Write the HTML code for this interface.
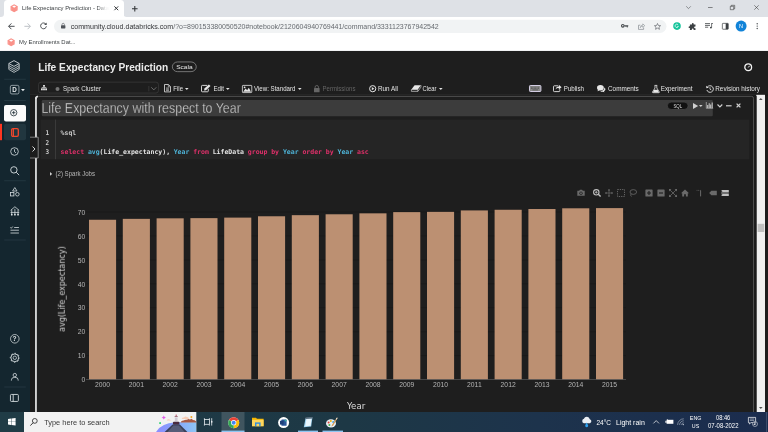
<!DOCTYPE html>
<html lang="en"><head><meta charset="utf-8"><title>Life Expectancy Prediction - Databricks</title>
<style>
html,body{margin:0;padding:0;background:#1e1e1e;}
body{width:768px;height:432px;overflow:hidden;position:relative;font-family:"Liberation Sans",sans-serif;}
.a{position:absolute;}
.t{position:absolute;left:0;top:0;white-space:pre;transform-origin:0 0;will-change:transform;}
.i{display:inline-block;transform-origin:0 0;}
svg{position:absolute;overflow:visible;}
</style></head><body>
<svg style="left:0px;top:0px" width="768" height="17"><rect x="0.00" y="0.00" width="768" height="17" rx="0" fill="#dee1e6"/></svg>
<div class="a" style="left:4px;top:0px;width:119.5px;height:17px;background:#fff;border-radius:3.5px 3.5px 0 0;"></div>
<svg style="left:0px;top:12px;" width="128" height="5" viewBox="0 0 128 5"><path d="M0.8 5 Q4 5 4 1.8 V5 Z M126.7 5 Q123.5 5 123.5 1.8 V5 Z" fill="#fff"/></svg>
<svg style="left:0px;top:17px" width="768" height="35"><rect x="0.00" y="0.00" width="768" height="34.3" rx="0" fill="#fff"/></svg>
<svg style="left:0px;top:50px" width="768" height="2"><rect x="0.00" y="0.70" width="768" height="0.6" rx="0" fill="#d0d3d8"/></svg>
<svg style="left:9.85px;top:4.049999999999999px;" width="8.3" height="8.715000000000002" viewBox="0 0 24 25.2"><path d="M12 0.5 L22.5 6.5 V18 L12 24 L1.5 18 V6.5 Z" fill="#fa9189"/><path d="M12 4.4 L17.6 7.6 L12 10.8 L6.4 7.6 Z" fill="#fff"/><path d="M1.5 11 L4.4 12.6 M22.5 11 L19.6 12.6 M1.5 15.2 L4.4 16.8 M22.5 15.2 L19.6 16.8" stroke="#fff" stroke-width="1" opacity=".7"/></svg>
<svg style="left:113.6px;top:6.1px;" width="4.6" height="4.6" viewBox="0 0 4.6 4.6"><path d="M0.4 0.4 L4.2 4.2 M4.2 0.4 L0.4 4.2" stroke="#303336" stroke-width="1" fill="none"/></svg>
<svg style="left:132.2px;top:5.6px;" width="5.6" height="5.6" viewBox="0 0 5.6 5.6"><path d="M2.8 0 V5.6 M0 2.8 H5.6" stroke="#303336" stroke-width="1.05" fill="none"/></svg>
<svg style="left:685.5px;top:5.5px;" width="5" height="3" viewBox="0 0 5 3"><path d="M0.2 0.3 L2.5 2.6 L4.8 0.3" stroke="#44474a" stroke-width="0.55" fill="none"/></svg>
<svg style="left:708px;top:7px" width="5" height="1"><rect x="0.00" y="0.30" width="4.6" height="0.55" rx="0" fill="#333"/></svg>
<svg style="left:730.2px;top:4.7px;" width="5" height="5" viewBox="0 0 5 5"><path d="M0.3 1.3 H3.7 V4.7 H0.3 Z M1.3 1.3 V0.3 H4.7 V3.7 H3.7" stroke="#333" stroke-width="0.55" fill="none"/></svg>
<svg style="left:753.8px;top:5px;" width="5" height="5" viewBox="0 0 5 5"><path d="M0.3 0.3 L4.7 4.7 M4.7 0.3 L0.3 4.7" stroke="#333" stroke-width="0.55" fill="none"/></svg>
<svg style="left:7.6px;top:23px;" width="7" height="6.6" viewBox="0 0 7 6.6"><path d="M3.4 0.4 L0.6 3.3 L3.4 6.2 M0.7 3.3 H6.6" stroke="#4a4e52" stroke-width="1" fill="none"/></svg>
<svg style="left:23.6px;top:23px;" width="7" height="6.6" viewBox="0 0 7 6.6"><path d="M3.6 0.4 L6.4 3.3 L3.6 6.2 M6.3 3.3 H0.4" stroke="#bdc1c6" stroke-width="1" fill="none"/></svg>
<svg style="left:39.6px;top:22.3px;" width="7" height="7" viewBox="0 0 7 7"><path d="M5.9 2.2 A2.9 2.9 0 1 0 6.4 4.3" stroke="#4a4e52" stroke-width="1" fill="none"/><path d="M6.7 0.4 V3 H4.1 Z" fill="#4a4e52"/></svg>
<svg style="left:54px;top:19px" width="613" height="14"><rect x="0.00" y="0.70" width="612.5" height="13.2" rx="6.6" fill="#f1f3f4"/></svg>
<svg style="left:60.8px;top:23px;" width="4.4" height="5.6" viewBox="0 0 4.4 5.6"><rect x="0" y="2.2" width="4.4" height="3.3" rx="0.5" fill="#50545a"/><path d="M1 2.4 V1.5 A1.2 1.2 0 0 1 3.4 1.5 V2.4" stroke="#50545a" stroke-width="0.6" fill="none"/></svg>
<svg style="left:621.2px;top:24.3px;" width="7.4" height="3.6" viewBox="0 0 7.4 3.6"><circle cx="1.8" cy="1.8" r="1.3" stroke="#44484c" stroke-width="1.1" fill="none"/><path d="M3.2 1.8 H7.3 M6.3 1.8 V3.4 M5 1.8 V2.9" stroke="#44484c" stroke-width="1" fill="none"/></svg>
<svg style="left:637.6px;top:22.8px;" width="7" height="6.8" viewBox="0 0 7 6.8"><path d="M2.4 2.2 H0.5 V6.4 H5.6 V4.6" stroke="#858b91" stroke-width="0.7" fill="none"/><path d="M2.3 4.6 C2.5 3 3.5 2.2 4.8 2.1 V0.9 L6.8 2.7 L4.8 4.4 V3.2 C3.8 3.2 2.9 3.6 2.3 4.6 Z" stroke="#858b91" stroke-width="0.6" fill="none"/></svg>
<svg style="left:653.5px;top:22.7px;" width="7" height="6.8" viewBox="0 0 7 6.8"><path d="M3.5 0.5 L4.4 2.5 L6.6 2.7 L4.95 4.15 L5.45 6.3 L3.5 5.15 L1.55 6.3 L2.05 4.15 L0.4 2.7 L2.6 2.5 Z" stroke="#50545a" stroke-width="0.6" fill="none" stroke-linejoin="round"/></svg>
<svg style="left:673px;top:22px" width="8" height="8"><rect x="0.20" y="0.30" width="7.6" height="7.6" rx="3.8" fill="#15c39a"/></svg>
<svg style="left:673.2px;top:22.3px;" width="7.6" height="7.6" viewBox="0 0 7.6 7.6"><path d="M5.2 2.9 A1.7 1.7 0 1 0 5.4 4.4 H4.1" stroke="#fff" stroke-width="0.7" fill="none"/></svg>
<svg style="left:689.2px;top:22.6px;" width="7.4" height="7.4" viewBox="0 0 7.4 7.4"><path d="M2.9 0.9 A0.9 0.9 0 0 1 4.7 0.9 V1.6 H6.5 V3.4 H6 A0.9 0.9 0 0 0 6 5.2 H6.5 V7 H4.6 V6.5 A0.9 0.9 0 0 0 2.8 6.5 V7 H0.9 V5.1 H0.5 A0.9 0.9 0 0 1 0.5 3.3 H0.9 V1.6 H2.9 Z" fill="#3c4043"/></svg>
<svg style="left:705.2px;top:23.2px;" width="8" height="6" viewBox="0 0 8 6"><path d="M0 0.6 H5 M0 2.4 H5 M0 4.2 H3.2" stroke="#3c4043" stroke-width="0.8" fill="none"/><path d="M6.6 0.2 V4.4" stroke="#3c4043" stroke-width="0.7"/><circle cx="5.9" cy="4.6" r="0.95" fill="#3c4043"/><path d="M6.6 0.2 H7.9 V1.1 H6.6Z" fill="#3c4043"/></svg>
<svg style="left:721.6px;top:22.8px;" width="6.6" height="6.6" viewBox="0 0 6.6 6.6"><rect x="0.35" y="0.35" width="5.9" height="5.9" rx="0.6" stroke="#3c4043" stroke-width="0.7" fill="none"/><rect x="3.7" y="0.4" width="2.5" height="5.8" fill="#3c4043"/></svg>
<svg style="left:735px;top:20px" width="12" height="12"><rect x="0.60" y="0.60" width="11" height="11" rx="5.5" fill="#1183d8"/></svg>
<svg style="left:756px;top:23px" width="2" height="2"><rect x="0.50" y="0.00" width="1.4" height="1.4" rx="0.7" fill="#44484c"/></svg>
<svg style="left:756px;top:25px" width="2" height="2"><rect x="0.50" y="0.40" width="1.4" height="1.4" rx="0.7" fill="#44484c"/></svg>
<svg style="left:756px;top:27px" width="2" height="3"><rect x="0.50" y="0.80" width="1.4" height="1.4" rx="0.7" fill="#44484c"/></svg>
<svg style="left:6.85px;top:38.050000000000004px;" width="8.3" height="8.715000000000002" viewBox="0 0 24 25.2"><path d="M12 0.5 L22.5 6.5 V18 L12 24 L1.5 18 V6.5 Z" fill="#fa9189"/><path d="M12 4.4 L17.6 7.6 L12 10.8 L6.4 7.6 Z" fill="#fff"/><path d="M1.5 11 L4.4 12.6 M22.5 11 L19.6 12.6 M1.5 15.2 L4.4 16.8 M22.5 15.2 L19.6 16.8" stroke="#fff" stroke-width="1" opacity=".7"/></svg>
<svg style="left:0px;top:51px" width="768" height="361"><rect x="0.00" y="0.00" width="768" height="361" rx="0" fill="#1e1e1e"/></svg>
<svg style="left:0px;top:51px" width="30" height="361"><rect x="0.00" y="0.00" width="30" height="361" rx="0" fill="#14262f"/></svg>
<svg style="left:8px;top:59.5px;" width="12" height="13" viewBox="0 0 12 13"><path d="M6 0.6 L11.2 3.5 L6 6.4 L0.8 3.5 Z" stroke="#cfd5d8" stroke-width="0.9" fill="none" stroke-linejoin="round"/><path d="M0.8 3.6 V9.4 L6 12.4 L11.2 9.4 V3.6" stroke="#cfd5d8" stroke-width="0.8" fill="none" stroke-linejoin="round"/><path d="M0.8 5.6 L6 8.6 L11.2 5.6 M0.8 7.5 L6 10.5 L11.2 7.5" stroke="#cfd5d8" stroke-width="0.8" fill="none"/></svg>
<svg style="left:4px;top:78px" width="22" height="2"><rect x="0.20" y="0.80" width="21.6" height="0.8" rx="0" fill="#263b44"/></svg>
<svg style="left:4px;top:100px" width="22" height="1"><rect x="0.20" y="0.10" width="21.6" height="0.8" rx="0" fill="#263b44"/></svg>
<svg style="left:9.9px;top:84.9px;" width="9.3" height="9.3" viewBox="0 0 9.3 9.3"><rect x="0.35" y="0.35" width="8.6" height="8.6" rx="1.5" stroke="#c3cdd1" stroke-width="0.7" fill="none"/></svg>
<svg style="left:21.1px;top:88.5px;" width="3.9" height="2.2" viewBox="0 0 3.9 2.2"><path d="M0 0 H3.9 L1.95 2.2 Z" fill="#e4e8ea"/></svg>
<svg style="left:4px;top:105px" width="22" height="17"><rect x="0.00" y="0.00" width="22" height="16.4" rx="2.0" fill="#fbfbfb"/></svg>
<svg style="left:10.3px;top:109.3px;" width="7.4" height="7.4" viewBox="0 0 7.4 7.4"><circle cx="3.7" cy="3.7" r="3.2" stroke="#1c2b33" stroke-width="0.8" fill="none"/><path d="M3.7 1.9 V5.5 M1.9 3.7 H5.5" stroke="#1c2b33" stroke-width="0.8"/></svg>
<svg style="left:4px;top:123px" width="22" height="18"><rect x="0.00" y="0.80" width="22" height="16.4" rx="2.0" fill="#21363f"/></svg>
<svg style="left:0px;top:123px" width="2" height="18"><rect x="0.00" y="0.80" width="2" height="16.4" rx="0" fill="#ff3621"/></svg>
<svg style="left:10.5px;top:127.5px;" width="8" height="9" viewBox="0 0 8 9"><rect x="0.7" y="0.7" width="6.6" height="7.6" rx="1.2" stroke="#f4482c" stroke-width="1.3" fill="none"/><path d="M2.4 0.7 V8.3" stroke="#f4482c" stroke-width="1.1"/></svg>
<svg style="left:10.4px;top:146.9px;" width="9" height="9" viewBox="0 0 8 8"><circle cx="4" cy="4" r="3.4" stroke="#d5dcdf" stroke-width="0.72" fill="none"/><path d="M4 2 V4.2 L5.4 5.2" stroke="#d5dcdf" stroke-width="0.72" fill="none"/></svg>
<svg style="left:10.2px;top:165.6px;" width="9.6" height="9.6" viewBox="0 0 8.4 8.4"><circle cx="3.4" cy="3.4" r="2.8" stroke="#d5dcdf" stroke-width="0.8" fill="none"/><path d="M5.5 5.5 L8 8" stroke="#d5dcdf" stroke-width="0.8"/></svg>
<svg style="left:4px;top:180px" width="22" height="2"><rect x="0.20" y="0.40" width="21.6" height="0.8" rx="0" fill="#263b44"/></svg>
<svg style="left:9.9px;top:186.9px;" width="9.6" height="9.6" viewBox="0 0 8.6 8.6"><path d="M4.3 0.5 L6.3 3.6 H2.3 Z" stroke="#d5dcdf" stroke-width="0.72" fill="none" stroke-linejoin="round"/><rect x="0.5" y="5" width="3" height="3" stroke="#d5dcdf" stroke-width="0.72" fill="none"/><circle cx="6.6" cy="6.5" r="1.6" stroke="#d5dcdf" stroke-width="0.72" fill="none"/></svg>
<svg style="left:9.8px;top:205.5px;" width="9.8" height="9.8" viewBox="0 0 9 9"><path d="M0.6 4 L4.5 0.7 L8.4 4 M1.6 3.4 V8.2 M7.4 3.4 V8.2 M4.5 2.6 V8.2 M0.5 5.9 H8.5" stroke="#d5dcdf" stroke-width="0.72" fill="none"/><circle cx="1.6" cy="8" r="0.8" fill="#dfe4e6"/><circle cx="4.5" cy="8" r="0.8" fill="#dfe4e6"/><circle cx="7.4" cy="8" r="0.8" fill="#dfe4e6"/></svg>
<svg style="left:10.1px;top:225.6px;" width="9.2" height="8" viewBox="0 0 8.4 7.4"><path d="M0.3 1.3 L1.1 2.1 L2.5 0.5 M3.8 1.4 H8.2 M0.4 3.9 H8.2 M0.4 6.5 H8.2" stroke="#d5dcdf" stroke-width="0.75" fill="none"/></svg>
<svg style="left:4px;top:239px" width="22" height="2"><rect x="0.20" y="0.60" width="21.6" height="0.8" rx="0" fill="#263b44"/></svg>
<svg style="left:9.7px;top:333.9px;" width="9.6" height="9.6" viewBox="0 0 9.6 9.6"><circle cx="4.8" cy="4.8" r="4.3" stroke="#d5dcdf" stroke-width="0.75" fill="none"/></svg>
<svg style="left:9.7px;top:352.7px;" width="9.6" height="9.6" viewBox="0 0 9.6 9.6"><circle cx="4.8" cy="4.8" r="3.9" stroke="#d5dcdf" stroke-width="0.9" fill="none"/><circle cx="4.8" cy="4.8" r="4.5" stroke="#d5dcdf" stroke-width="0.9" fill="none" stroke-dasharray="1.4 2.13" stroke-dashoffset="0.7"/><circle cx="4.8" cy="4.8" r="1.7" stroke="#d5dcdf" stroke-width="0.75" fill="none"/></svg>
<svg style="left:10.9px;top:372.6px;" width="7.6" height="7.8" viewBox="0 0 7.6 7.8"><circle cx="3.8" cy="2.1" r="1.7" stroke="#d5dcdf" stroke-width="0.8" fill="none"/><path d="M0.4 7.6 V6.9 A3.4 2.6 0 0 1 7.2 6.9 V7.6" stroke="#d5dcdf" stroke-width="0.8" fill="none"/></svg>
<svg style="left:4px;top:386px" width="22" height="2"><rect x="0.20" y="0.60" width="21.6" height="0.8" rx="0" fill="#263b44"/></svg>
<svg style="left:10.1px;top:394px;" width="8.8" height="8" viewBox="0 0 8.8 8"><rect x="0.45" y="0.45" width="7.9" height="7" rx="0.9" stroke="#d5dcdf" stroke-width="0.9" fill="none"/><path d="M3.2 0.5 V7.5" stroke="#d5dcdf" stroke-width="0.9"/></svg>
<svg style="left:172px;top:61px" width="25" height="11"><rect x="0.35" y="0.95" width="23.90" height="9.70" rx="5.2" fill="none" stroke="#9a9a9a" stroke-width="0.7"/></svg>
<svg style="left:743.6px;top:62.8px;" width="8.4" height="8.4" viewBox="0 0 8.4 8.4"><circle cx="4.2" cy="4.2" r="3.4" stroke="#f2f2f2" stroke-width="1.3" fill="none"/><path d="M4.2 4.5 L5.7 2.7" stroke="#f2f2f2" stroke-width="1"/></svg>
<svg style="left:38px;top:81px" width="121" height="13"><rect x="0.55" y="1.15" width="119.90" height="10.90" rx="2.5" fill="none" stroke="#3e3e3e" stroke-width="0.7"/></svg>
<svg style="left:41.2px;top:85.2px;" width="6" height="5.4" viewBox="0 0 6 5.4"><path d="M3 0.2 V2.6 M0.9 4 V2.6 H5.1 V4 M3 2.6 V4" stroke="#ddd" stroke-width="0.7" fill="none"/><rect x="2.1" y="0" width="1.8" height="1.6" fill="#ddd"/><rect x="0" y="3.6" width="1.8" height="1.7" fill="#ddd"/><rect x="2.1" y="3.6" width="1.8" height="1.7" fill="#ddd"/><rect x="4.2" y="3.6" width="1.8" height="1.7" fill="#ddd"/></svg>
<svg style="left:55px;top:86px" width="5" height="5"><rect x="0.50" y="0.90" width="4" height="4" rx="2.0" fill="#747474"/></svg>
<svg style="left:148px;top:86px" width="2" height="6"><rect x="0.60" y="0.00" width="0.6" height="5.4" rx="0" fill="#444"/></svg>
<svg style="left:151px;top:87px;" width="5.6" height="3.4" viewBox="0 0 5.6 3.4"><path d="M0.3 0.3 L2.8 2.9 L5.3 0.3" stroke="#8a8a8a" stroke-width="0.7" fill="none"/></svg>
<svg style="left:164.2px;top:84.4px;" width="7" height="8.4" viewBox="0 0 7 8.4"><path d="M0.5 0.5 H4.4 L6.5 2.6 V7.9 H0.5 Z" stroke="#e6e6e6" stroke-width="0.8" fill="none" stroke-linejoin="round"/><path d="M4.3 0.6 V2.8 H6.4" stroke="#e6e6e6" stroke-width="0.6" fill="none"/><path d="M2 4 H5 M2 5.2 H5 M2 6.4 H5" stroke="#e6e6e6" stroke-width="0.6"/></svg>
<svg style="left:184.79999999999998px;top:88.1px;" width="3.6" height="2" viewBox="0 0 3.6 2"><path d="M0 0 H3.6 L1.8 2 Z" fill="#e4e4e4"/></svg>
<svg style="left:201.2px;top:84.4px;" width="10.6" height="8.4" viewBox="0 0 10.6 8.4"><path d="M6.2 1.4 H1.3 A0.8 0.8 0 0 0 0.5 2.2 V7 A0.8 0.8 0 0 0 1.3 7.8 H6.5 A0.8 0.8 0 0 0 7.3 7 V4.8" stroke="#e6e6e6" stroke-width="0.9" fill="none"/><path d="M3.4 4.6 L7.9 0.4 L9.5 1.9 L5 6.2 L3.1 6.6 Z" fill="#e6e6e6"/></svg>
<svg style="left:225.79999999999998px;top:88.1px;" width="3.6" height="2" viewBox="0 0 3.6 2"><path d="M0 0 H3.6 L1.8 2 Z" fill="#e4e4e4"/></svg>
<svg style="left:242px;top:84.6px;" width="10.2" height="8" viewBox="0 0 10.2 8"><rect x="0.4" y="0.4" width="9.4" height="7.2" rx="0.6" stroke="#e6e6e6" stroke-width="0.8" fill="none"/><path d="M1.2 6.8 L3.6 3.4 L5.2 5.2 L6.8 2.8 L9 6.8 Z" fill="#e6e6e6"/><circle cx="2.6" cy="2.3" r="0.9" fill="#e6e6e6"/></svg>
<svg style="left:297.9px;top:88.1px;" width="3.6" height="2" viewBox="0 0 3.6 2"><path d="M0 0 H3.6 L1.8 2 Z" fill="#e4e4e4"/></svg>
<svg style="left:314.4px;top:84.8px;" width="5.6" height="7.2" viewBox="0 0 5.6 7.2"><rect x="0" y="3" width="5.6" height="4.2" rx="0.5" fill="#666"/><path d="M1.1 3.2 V2.2 A1.7 1.7 0 0 1 4.5 2.2 V3.2" stroke="#666" stroke-width="0.9" fill="none"/></svg>
<svg style="left:368.6px;top:85px;" width="7.4" height="7.4" viewBox="0 0 7.4 7.4"><circle cx="3.7" cy="3.7" r="3.1" stroke="#e6e6e6" stroke-width="1" fill="none"/><path d="M2.8 2.1 L5.4 3.7 L2.8 5.3 Z" fill="#e6e6e6"/></svg>
<svg style="left:411px;top:85.4px;" width="10.4" height="6.8" viewBox="0 0 10.4 6.8"><path d="M3.6 0.3 H10 L6.8 4.6 H0.4 Z" fill="#e6e6e6"/><path d="M0.4 4.6 H6.8 V6.4 H0.4 Z" stroke="#e6e6e6" stroke-width="0.6" fill="none"/><path d="M6.8 6.4 L10 2.1 V0.3" stroke="#e6e6e6" stroke-width="0.6" fill="none"/></svg>
<svg style="left:438.9px;top:88.1px;" width="3.6" height="2" viewBox="0 0 3.6 2"><path d="M0 0 H3.6 L1.8 2 Z" fill="#e4e4e4"/></svg>
<svg style="left:528.6px;top:85.4px;" width="12.4" height="7" viewBox="0 0 12.4 7"><rect x="0.5" y="0.5" width="11.4" height="6" rx="0.8" stroke="#d6d0e6" stroke-width="1" fill="#8a8a8a"/><path d="M2 2.2 H10.4 M2 3.5 H10.4" stroke="#4a4a4a" stroke-width="0.7" stroke-dasharray="0.9 0.5"/><path d="M3.4 4.9 H9" stroke="#4a4a4a" stroke-width="0.7"/></svg>
<svg style="left:553px;top:84.4px;" width="8.8" height="8" viewBox="0 0 8.8 8"><path d="M5 1.8 H1.3 A0.8 0.8 0 0 0 0.5 2.6 V6.8 A0.8 0.8 0 0 0 1.3 7.6 H6 A0.8 0.8 0 0 0 6.8 6.8 V5.2" stroke="#e6e6e6" stroke-width="0.9" fill="none"/><path d="M2.6 5.6 C2.8 3.4 4 2.5 5.8 2.4 V0.7 L8.6 3.2 L5.8 5.6 V4.1 C4.4 4.1 3.4 4.5 2.6 5.6 Z" fill="#e6e6e6"/></svg>
<svg style="left:597px;top:85px;" width="9" height="7.4" viewBox="0 0 9 7.4"><ellipse cx="3.4" cy="2.8" rx="3.4" ry="2.7" fill="#e6e6e6"/><path d="M1 4.4 L0.6 6.2 L2.8 5.2 Z" fill="#e6e6e6"/><path d="M7.2 2.4 A2.9 2.3 0 0 1 6.9 6.3 L7.6 7.3 L5.4 6.8 A3 2.3 0 0 1 3.2 6.2 A4 3.2 0 0 0 7.2 2.4 Z" fill="#e6e6e6"/></svg>
<svg style="left:652px;top:84.6px;" width="7.8" height="8" viewBox="0 0 7.8 8"><path d="M2.6 0.4 H5.2 M3 0.4 V3 L0.5 7 A0.5 0.5 0 0 0 0.9 7.7 H6.9 A0.5 0.5 0 0 0 7.3 7 L4.8 3 V0.4" stroke="#e6e6e6" stroke-width="0.8" fill="none"/><path d="M2.2 4.8 H5.6 L7 7.4 H0.8 Z" fill="#e6e6e6"/></svg>
<svg style="left:705.8px;top:84.8px;" width="7.8" height="7.8" viewBox="0 0 7.8 7.8"><path d="M1.3 2.2 A3.3 3.3 0 1 1 0.9 5" stroke="#e6e6e6" stroke-width="0.9" fill="none"/><path d="M0.1 0.7 L0.4 3.3 L2.9 2.7 Z" fill="#e6e6e6"/><path d="M4 2.2 V4.2 L5.3 5" stroke="#e6e6e6" stroke-width="0.8" fill="none"/></svg>
<svg style="left:30px;top:94px" width="727" height="1"><rect x="0.00" y="0.00" width="726.3" height="0.7" rx="0" fill="#484848"/></svg>
<svg style="left:30px;top:94px" width="738" height="2"><rect x="0.00" y="0.40" width="738" height="1.6" rx="0" fill="#1a1a1a"/></svg>
<svg style="left:756px;top:94px" width="9" height="318"><rect x="0.30" y="0.80" width="8.7" height="317.2" rx="0" fill="#f1f1f1"/></svg>
<svg style="left:759px;top:98.4px;" width="3.6" height="2" viewBox="0 0 3.6 2"><path d="M0 2 H3.6 L1.8 0 Z" fill="#505050"/></svg>
<svg style="left:759px;top:406.8px;" width="3.6" height="2" viewBox="0 0 3.6 2"><path d="M0 0 H3.6 L1.8 2 Z" fill="#505050"/></svg>
<svg style="left:757px;top:223px" width="8" height="9"><rect x="0.60" y="0.80" width="6.6" height="8.2" rx="0" fill="#c1c1c1"/></svg>
<svg style="left:30px;top:96px" width="727" height="316"><rect x="0.00" y="0.00" width="726.6" height="316" rx="0" fill="#1b1b1b"/></svg>
<svg style="left:35px;top:96px" width="719" height="330"><rect x="0.95" y="0.35" width="717.60" height="329.30" rx="2" fill="#1e1e1e" stroke="#6a6a6a" stroke-width="0.7"/></svg>
<svg style="left:35px;top:97px" width="2" height="321"><rect x="0.10" y="0.40" width="1.7" height="320" rx="0" fill="#e2e2e2"/></svg>
<svg style="left:35px;top:96px;" width="3" height="3" viewBox="0 0 3 3"><path d="M0.95 3 V2 A1.4 1.4 0 0 1 2.4 0.6 H3" stroke="#e2e2e2" stroke-width="1.7" fill="none"/></svg>
<svg style="left:41px;top:100px" width="672" height="17"><rect x="0.80" y="0.00" width="671" height="16.2" rx="1.2" fill="#3c3c3c"/></svg>
<svg style="left:667px;top:101px" width="22" height="9"><rect x="0.30" y="1.10" width="20.80" height="7.40" rx="4" fill="#111111" stroke="#505050" stroke-width="0.6"/></svg>
<svg style="left:693px;top:102.8px;" width="5.2" height="6" viewBox="0 0 5.2 6"><path d="M0 0 L5.2 3 L0 6 Z" fill="#d0d0d0"/></svg>
<svg style="left:699.2px;top:105.1px;" width="3.6" height="2" viewBox="0 0 3.6 2"><path d="M0 0 H3.6 L1.8 2 Z" fill="#d0d0d0"/></svg>
<svg style="left:706.2px;top:102.4px;" width="7.2" height="6.6" viewBox="0 0 7.2 6.6"><path d="M0.3 0 V6.3 H7.2" stroke="#d0d0d0" stroke-width="0.6" fill="none"/><path d="M1.2 6 V3 H2.2 V6 Z M2.7 6 V1.2 H3.7 V6 Z M4.2 6 V2.4 H5.2 V6 Z M5.7 6 V0.6 H6.7 V6 Z" fill="#d0d0d0"/></svg>
<svg style="left:716.8px;top:104.4px;" width="5.8" height="3.6" viewBox="0 0 5.8 3.6"><path d="M0.5 0.5 L2.9 2.9 L5.3 0.5" stroke="#d0d0d0" stroke-width="1.1" fill="none"/></svg>
<svg style="left:726px;top:105px" width="6" height="2"><rect x="0.00" y="0.20" width="5.6" height="1.2" rx="0" fill="#d0d0d0"/></svg>
<svg style="left:735.8px;top:103.4px;" width="5" height="5" viewBox="0 0 5 5"><path d="M0.6 0.6 L4.4 4.4 M4.4 0.6 L0.6 4.4" stroke="#d0d0d0" stroke-width="1.3" fill="none"/></svg>
<svg style="left:40px;top:119px" width="710" height="41"><rect x="0.60" y="0.60" width="708.6" height="39.6" rx="0" fill="#252525"/></svg>
<svg style="left:55px;top:119px" width="1" height="41"><rect x="0.40" y="0.60" width="0.6" height="39.6" rx="0" fill="#4a4a4a"/></svg>
<svg style="left:30px;top:136px;" width="10" height="24" viewBox="0 0 10 24"><path d="M0 1.2 H8.2 V22 H0" fill="#1c1c1c" stroke="#a8a8a8" stroke-width="0.7"/></svg>
<svg style="left:31.6px;top:145.6px;" width="3.6" height="6" viewBox="0 0 3.6 6"><path d="M0.5 0.5 L3 3 L0.5 5.5" stroke="#eee" stroke-width="0.9" fill="none"/></svg>
<svg style="left:49.6px;top:171.5px;" width="2.2" height="3.8" viewBox="0 0 2.2 3.8"><path d="M0 0 L2.2 1.9 L0 3.8 Z" fill="#cfcfcf"/></svg>
<svg style="left:0px;top:0px;" width="768" height="432" viewBox="0 0 768 432"><rect x="86" y="355.25" width="540" height="0.8" fill="#191919"/><rect x="86" y="331.31" width="540" height="0.8" fill="#191919"/><rect x="86" y="307.36" width="540" height="0.8" fill="#191919"/><rect x="86" y="283.42" width="540" height="0.8" fill="#191919"/><rect x="86" y="259.47" width="540" height="0.8" fill="#191919"/><rect x="86" y="235.52" width="540" height="0.8" fill="#191919"/><rect x="86" y="211.58" width="540" height="0.8" fill="#191919"/><rect x="89.00" y="219.76" width="27.1" height="159.84" fill="#bc9072"/><rect x="122.80" y="218.85" width="27.1" height="160.75" fill="#bc9072"/><rect x="156.60" y="218.32" width="27.1" height="161.28" fill="#bc9072"/><rect x="190.40" y="218.13" width="27.1" height="161.47" fill="#bc9072"/><rect x="224.20" y="217.61" width="27.1" height="161.99" fill="#bc9072"/><rect x="258.00" y="216.26" width="27.1" height="163.34" fill="#bc9072"/><rect x="291.80" y="215.16" width="27.1" height="164.44" fill="#bc9072"/><rect x="325.60" y="214.28" width="27.1" height="165.32" fill="#bc9072"/><rect x="359.40" y="213.34" width="27.1" height="166.26" fill="#bc9072"/><rect x="393.20" y="212.12" width="27.1" height="167.48" fill="#bc9072"/><rect x="427.00" y="211.86" width="27.1" height="167.74" fill="#bc9072"/><rect x="460.80" y="210.42" width="27.1" height="169.18" fill="#bc9072"/><rect x="494.60" y="209.77" width="27.1" height="169.83" fill="#bc9072"/><rect x="528.40" y="209.01" width="27.1" height="170.59" fill="#bc9072"/><rect x="562.20" y="208.29" width="27.1" height="171.31" fill="#bc9072"/><rect x="596.00" y="208.10" width="27.1" height="171.50" fill="#bc9072"/><rect x="86" y="379.25" width="540" height="0.7" fill="#5a5a5a"/></svg>
<div class="a" style="left:62.6px;top:289.4px;width:0;height:0;"><span style="position:absolute;white-space:pre;left:-42.8px;top:-6px;line-height:12px;font-family:'DejaVu Sans','Liberation Sans',sans-serif;font-size:8px;color:#d2d2d2;transform:rotate(-90deg);transform-origin:42.8px 6px;will-change:transform;">avg(Life_expectancy)</span></div>
<svg style="left:577.0px;top:189.0px;" width="8" height="8" viewBox="0 0 8 8"><path d="M0.3 1.8 H2.2 L2.9 0.8 H5.1 L5.8 1.8 H7.7 V6.8 H0.3 Z" fill="#6a6a6a"/><circle cx="4" cy="4.2" r="1.6" fill="#1e1e1e"/><circle cx="4" cy="4.2" r="0.9" fill="#6a6a6a"/></svg>
<svg style="left:592.8px;top:189.0px;" width="8" height="8" viewBox="0 0 8 8"><circle cx="3.3" cy="3.3" r="2.7" stroke="#c0c0c0" stroke-width="1.1" fill="none"/><path d="M5.3 5.3 L7.6 7.6" stroke="#c0c0c0" stroke-width="1.4"/><path d="M3.3 2 V4.6 M2 3.3 H4.6" stroke="#c0c0c0" stroke-width="0.8"/></svg>
<svg style="left:605.0px;top:189.0px;" width="8" height="8" viewBox="0 0 8 8"><path d="M4 0.2 V7.8 M0.2 4 H7.8" stroke="#6a6a6a" stroke-width="0.7"/><path d="M4 0 L5.2 1.5 H2.8 Z M4 8 L5.2 6.5 H2.8 Z M0 4 L1.5 2.8 V5.2 Z M8 4 L6.5 2.8 V5.2 Z" fill="#6a6a6a"/></svg>
<svg style="left:617.0px;top:189.0px;" width="8" height="8" viewBox="0 0 8 8"><rect x="0.5" y="0.5" width="7" height="7" stroke="#6a6a6a" stroke-width="0.9" fill="none" stroke-dasharray="1.3 1"/></svg>
<svg style="left:629.0px;top:189.0px;" width="8" height="8" viewBox="0 0 8 8"><ellipse cx="4.3" cy="3" rx="3.3" ry="2.4" stroke="#6a6a6a" stroke-width="0.8" fill="none"/><path d="M2.4 5 C1.2 5.4 1.4 6.8 2.6 7.4" stroke="#6a6a6a" stroke-width="0.8" fill="none"/></svg>
<svg style="left:645.4px;top:189.0px;" width="8" height="8" viewBox="0 0 8 8"><rect x="0.4" y="0.4" width="7.2" height="7.2" rx="0.6" fill="#6a6a6a"/><path d="M4 2 V6 M2 4 H6" stroke="#1e1e1e" stroke-width="1.1"/></svg>
<svg style="left:657.4px;top:189.0px;" width="8" height="8" viewBox="0 0 8 8"><rect x="0.4" y="0.4" width="7.2" height="7.2" rx="0.6" fill="#6a6a6a"/><path d="M2 4 H6" stroke="#1e1e1e" stroke-width="1.1"/></svg>
<svg style="left:669.0px;top:189.0px;" width="8" height="8" viewBox="0 0 8 8"><path d="M0.8 0.8 L7.2 7.2 M7.2 0.8 L0.8 7.2" stroke="#6a6a6a" stroke-width="0.8"/><path d="M0 0 H2.4 L0 2.4 Z M8 0 H5.6 L8 2.4 Z M0 8 H2.4 L0 5.6 Z M8 8 H5.6 L8 5.6 Z" fill="#6a6a6a"/></svg>
<svg style="left:681.2px;top:189.0px;" width="8" height="8" viewBox="0 0 8 8"><path d="M4 0.6 L8 4.2 H6.8 V7.6 H4.9 V5.2 H3.1 V7.6 H1.2 V4.2 H0 Z" fill="#6a6a6a"/></svg>
<svg style="left:696.2px;top:189.0px;" width="8" height="8" viewBox="0 0 8 8"><path d="M4.6 7.4 V1.4" stroke="#6a6a6a" stroke-width="1"/><path d="M0.6 1.4 H4.6" stroke="#6a6a6a" stroke-width="0.7" stroke-dasharray="0.9 0.7"/></svg>
<svg style="left:709.0px;top:189.0px;" width="8" height="8" viewBox="0 0 8 8"><path d="M0.2 4 L2.4 1.8 H7.8 V6.2 H2.4 Z" fill="#6a6a6a"/></svg>
<svg style="left:721.2px;top:189.0px;" width="8" height="8" viewBox="0 0 8 8"><rect x="0.2" y="1" width="7.6" height="2.5" fill="#c0c0c0"/><rect x="0.2" y="4.5" width="7.6" height="2.5" fill="#c0c0c0"/><path d="M0.2 1 L1.4 2.2 L0.2 3.5 Z M0.2 4.5 L1.4 5.7 L0.2 7 Z" fill="#1e1e1e"/></svg>
<div class="a" style="left:0px;top:412px;width:768px;height:20px;background:linear-gradient(90deg,#1f3b46 0%,#1d3845 45%,#1d334c 70%,#1b2c4e 100%);"></div>
<svg style="left:0px;top:412px" width="24" height="20"><rect x="0.00" y="0.00" width="24" height="20" rx="0" fill="#203c46"/></svg>
<svg style="left:8.2px;top:418.4px;" width="7.6" height="7.6" viewBox="0 0 7.6 7.6"><path d="M0 1.05 L3.1 0.62 V3.65 H0 Z M3.5 0.56 L7.6 0 V3.65 H3.5 Z M0 4 H3.1 V7 L0 6.58 Z M3.5 4 H7.6 V7.6 L3.5 7.04 Z" fill="#fff"/></svg>
<svg style="left:24px;top:412px" width="173" height="20"><rect x="0.00" y="0.00" width="172.3" height="20" rx="0" fill="#f2f2f2"/></svg>
<svg style="left:30px;top:418px;" width="7.6" height="8" viewBox="0 0 7.6 8"><circle cx="4.8" cy="2.9" r="2.4" stroke="#222" stroke-width="0.8" fill="none"/><path d="M3.1 4.7 L0.4 7.6" stroke="#222" stroke-width="0.9"/></svg>
<svg style="left:156px;top:412px;" width="41" height="20" viewBox="0 0 41 20"><defs><clipPath id="lc"><rect x="0" y="0" width="40.3" height="20"/></clipPath><linearGradient id="sea" x1="0" x2="1" y1="0" y2="0"><stop offset="0" stop-color="#8c8cff"/><stop offset="0.55" stop-color="#86a8fb"/><stop offset="1" stop-color="#8fc6f4"/></linearGradient></defs><g clip-path="url(#lc)"><path d="M0 20 Q4 11.5 20 10.2 H40.3 V20 Z" fill="url(#sea)"/><path d="M24.6 10.2 Q25.6 8.4 27.6 8.6 Q29 7.4 31 7.8 L32.4 7 L34 7.6 L35.6 6.8 L37 8 L38.6 8.2 L40.3 9.4 V10.4 H24.6 Z" fill="#a85a44"/><path d="M25.6 7 Q26.4 5.2 28 5.6 Q29.2 3.8 31 5 Q32.6 4.8 33 7 Z" fill="#f6cdb6"/><path d="M10.6 8.6 Q12 6.6 13.2 7.6 Q14.4 7.6 14.8 8.6 Z" fill="#f6cdb6"/><rect x="18.4" y="4.6" width="3.6" height="5.6" rx="0.5" fill="#e9e6ea"/><rect x="19" y="5.6" width="2.4" height="3.6" fill="#cfccd6"/><path d="M18.2 4.8 Q20.2 2.6 22.2 4.8 Z" fill="#8a4a5a"/><rect x="19.7" y="2.6" width="1" height="1.2" fill="#b0405a"/><rect x="17" y="9.8" width="6.4" height="3" rx="0.8" fill="#4a2c40"/><path d="M16.6 12.6 H23.8 L31.4 20 H8.6 Z" fill="#3a3f56"/><path d="M17.4 13.4 H23 L28.6 20 H11.4 Z" fill="#565c78"/><path d="M7.8 3.6 L8.6 5 L10 5.6 L8.6 6.2 L7.8 7.6 L7 6.2 L5.6 5.6 L7 5 Z" fill="#e25be8"/><rect x="3.2" y="10.2" width="1.8" height="1.8" fill="#3fd47a"/><circle cx="35.4" cy="5" r="1" fill="#f7a81e"/></g></svg>
<svg style="left:203.8px;top:418px;" width="8.6" height="7.8" viewBox="0 0 8.6 7.8"><rect x="0.4" y="1.5" width="5" height="4.8" stroke="#e8eef2" stroke-width="0.8" fill="none"/><path d="M0.4 0.2 V1.5 M5.4 0.2 V1.5 M0.4 6.3 V7.6 M5.4 6.3 V7.6" stroke="#e8eef2" stroke-width="0.8"/><path d="M7.7 0.2 V7.6" stroke="#e8eef2" stroke-width="0.8"/><rect x="7" y="3" width="1.4" height="1.6" fill="#e8eef2"/></svg>
<svg style="left:221px;top:412px" width="24" height="20"><rect x="0.50" y="0.00" width="23" height="20" rx="0" fill="#40555f"/></svg>
<svg style="left:221px;top:430px" width="24" height="2"><rect x="0.50" y="0.60" width="23" height="1.4" rx="0" fill="#8ec6f2"/></svg>
<svg style="left:228px;top:416.6px;" width="11.4" height="11.4" viewBox="0 0 11.4 11.4"><circle cx="5.7" cy="5.7" r="5.5" fill="#fff"/><path d="M5.7 5.7 L0.94 2.95 A5.5 5.5 0 0 1 10.46 2.95 Z" fill="#ea4335"/><path d="M5.7 5.7 L10.46 2.95 A5.5 5.5 0 0 1 5.7 11.2 Z" fill="#fbbc05"/><path d="M5.7 5.7 L5.7 11.2 A5.5 5.5 0 0 1 0.94 2.95 Z" fill="#34a853"/><circle cx="5.7" cy="5.7" r="2.6" fill="#fff"/><circle cx="5.7" cy="5.7" r="2" fill="#4285f4"/></svg>
<svg style="left:252.4px;top:417.4px;" width="11.6" height="9.4" viewBox="0 0 11.6 9.4"><path d="M0 0.8 H4 L5 1.8 H11.6 V9.2 H0 Z" fill="#f5b700"/><path d="M0 2.8 H11.6 V9.2 H0 Z" fill="#ffd75e"/><rect x="3" y="5.4" width="5.6" height="3.8" fill="#2f8ee0"/><rect x="4.4" y="6.8" width="2.8" height="2.4" fill="#ffd75e"/></svg>
<svg style="left:278px;top:416.6px;" width="11.2" height="11.2" viewBox="0 0 11.2 11.2"><circle cx="5.6" cy="5.6" r="5.5" fill="#fff"/><rect x="3.4" y="2.6" width="5.2" height="6.2" rx="0.6" fill="#2b579a"/><rect x="2" y="3.8" width="3.6" height="3.8" fill="#1d3f7a"/><circle cx="7.6" cy="3.4" r="1" fill="#3fb3a1"/></svg>
<svg style="left:302.6px;top:416.8px;" width="10.4" height="10.6" viewBox="0 0 10.4 10.6"><path d="M2.6 1 L9.4 0.2 L8.2 9.6 L0.8 10.2 Z" fill="#9fd2ee"/><path d="M3.4 2 L8.6 1.4 L7.6 8.8 L2.2 9.2 Z" fill="#e9f5fb"/><path d="M2.4 0.6 L9.6 0 L9.4 1.4 L2.4 2 Z" fill="#5a6a78"/></svg>
<svg style="left:298px;top:430px" width="20" height="2"><rect x="0.00" y="0.60" width="20" height="1.4" rx="0" fill="#8ec6f2"/></svg>
<svg style="left:326px;top:416.6px;" width="11.6" height="11" viewBox="0 0 11.6 11"><ellipse cx="5" cy="6.4" rx="5" ry="4.2" fill="#e8eef4"/><circle cx="2.6" cy="5.6" r="1" fill="#e0443a"/><circle cx="4.8" cy="4" r="1" fill="#f5b700"/><circle cx="7.2" cy="5" r="1" fill="#3fa0e0"/><circle cx="3.4" cy="8" r="1" fill="#46b04a"/><path d="M11 0.4 L6.2 7.6 L5.4 9.6 L7.2 8.4 L11.6 1 Z" fill="#d99a4a"/><path d="M11 0.4 L9.8 2.2 L10.4 2.8 L11.6 1 Z" fill="#f1f1f1"/></svg>
<svg style="left:322px;top:430px" width="21" height="2"><rect x="0.50" y="0.60" width="20.5" height="1.4" rx="0" fill="#8ec6f2"/></svg>
<svg style="left:581px;top:417.4px;" width="11.6" height="9.6" viewBox="0 0 11.6 9.6"><path d="M2.8 6.2 A2.3 2.3 0 0 1 2.9 1.8 A3.1 3.1 0 0 1 8.8 2.2 A2.1 2.1 0 0 1 9 6.2 Z" fill="#e9eef3"/><path d="M5.6 5.4 L7 8 A1.5 1.5 0 1 1 4.4 8 Z" fill="#2ea3f2"/></svg>
<svg style="left:653.4px;top:419.8px;" width="6.4" height="3.8" viewBox="0 0 6.4 3.8"><path d="M0.4 3.4 L3.2 0.6 L6 3.4" stroke="#fff" stroke-width="0.7" fill="none"/></svg>
<svg style="left:664.6px;top:419.4px;" width="8.6" height="5.6" viewBox="0 0 8.6 5.6"><rect x="1.6" y="0.8" width="6.8" height="4" fill="#fff"/><rect x="0.4" y="1.8" width="1.2" height="2" fill="#fff"/><path d="M2.4 0 V1.2" stroke="#fff" stroke-width="0.6"/></svg>
<svg style="left:677.4px;top:418.2px;" width="7.4" height="7.4" viewBox="0 0 7.4 7.4"><path d="M0.6 7 A6.2 6.2 0 0 1 6.8 0.8 M2.6 7 A4.2 4.2 0 0 1 6.8 2.8 M4.6 7 A2.2 2.2 0 0 1 6.8 4.8" stroke="#9aa4b4" stroke-width="0.7" fill="none"/><circle cx="6.3" cy="6.6" r="0.7" fill="#c8d0dc"/></svg>
<svg style="left:747.6px;top:417px;" width="9.6" height="9.6" viewBox="0 0 9.6 9.6"><path d="M0.4 0.4 H7.6 V5.6 H3 L1.4 7 V5.6 H0.4 Z" stroke="#fff" stroke-width="0.7" fill="none"/><path d="M1.8 2 H6.2 M1.8 3.4 H6.2" stroke="#fff" stroke-width="0.5"/><circle cx="7" cy="7" r="2.5" fill="#1b2c4e" stroke="#fff" stroke-width="0.5"/></svg>
<svg style="left:766px;top:412px" width="1" height="20"><rect x="0.20" y="0.00" width="0.5" height="20" rx="0" fill="#5a6a86"/></svg>
<span class="t" style="transform:translate3d(22px,3.22px,0);line-height:10px;font-family:'Liberation Sans', sans-serif;font-size:6.2px;font-weight:normal;color:#3c4043;"><span class="i" style="transform:translateX(0.00px) scaleX(0.9510)">Life Expectancy Prediction - Data</span></span>
<span class="t" style="transform:translate3d(70px,21.07px,0);line-height:11px;font-family:'Liberation Sans', sans-serif;font-size:7px;font-weight:normal;color:#202124;-webkit-text-stroke:0.05px #f1f3f4;"><span class="i" style="transform:translateX(0.70px) scaleX(1.0145)">community.cloud.databricks.com</span></span>
<span class="t" style="transform:translate3d(173px,21.07px,0);line-height:11px;font-family:'Liberation Sans', sans-serif;font-size:7px;font-weight:normal;color:#666a6f;"><span class="i" style="transform:translateX(0.20px)">/?o=890153380050520#notebook/2120604940769441/command/3331123767942542</span></span>
<span class="t" style="transform:translate3d(739px,20.94px,0);line-height:10px;font-family:'Liberation Sans', sans-serif;font-size:5.6px;font-weight:normal;color:#fff;"><span class="i" style="transform:translateX(0.08px)">N</span></span>
<span class="t" style="transform:translate3d(19px,37.12px,0);line-height:10px;font-family:'Liberation Sans', sans-serif;font-size:6.2px;font-weight:normal;color:#3c4043;"><span class="i" style="transform:translateX(0.00px) scaleX(0.9551)">My Enrollments Dat...</span></span>
<span class="t" style="transform:translate3d(12px,84.40px,0);line-height:11px;font-family:'Liberation Sans', sans-serif;font-size:6.3px;font-weight:bold;color:#e4e8ea;"><span class="i" style="transform:translateX(0.22px)">D</span></span>
<span class="t" style="transform:translate3d(12px,333.05px,0);line-height:11px;font-family:'Liberation Sans', sans-serif;font-size:6.6px;font-weight:bold;color:#dfe4e6;"><span class="i" style="transform:translateX(0.48px)">?</span></span>
<span class="t" style="transform:translate3d(38px,58.85px,0);line-height:16px;font-family:'Liberation Sans', sans-serif;font-size:10.8px;font-weight:bold;color:#ececec;"><span class="i" style="transform:translateX(0.20px) scaleX(0.9419)">Life Expectancy Prediction</span></span>
<span class="t" style="transform:translate3d(176px,61.54px,0);line-height:10px;font-family:'Liberation Sans', sans-serif;font-size:5.6px;font-weight:normal;color:#e8e8e8;"><span class="i" style="transform:translateX(0.20px) scaleX(1.1714)">Scala</span></span>
<span class="t" style="transform:translate3d(63px,83.17px,0);line-height:11px;font-family:'Liberation Sans', sans-serif;font-size:7px;font-weight:normal;color:#e0e0e0;"><span class="i" style="transform:translateX(0.00px) scaleX(0.8961)">Spark Cluster</span></span>
<span class="t" style="transform:translate3d(173px,83.17px,0);line-height:11px;font-family:'Liberation Sans', sans-serif;font-size:7px;font-weight:normal;color:#e4e4e4;"><span class="i" style="transform:translateX(0.30px) scaleX(0.8598)">File</span></span>
<span class="t" style="transform:translate3d(213px,83.17px,0);line-height:11px;font-family:'Liberation Sans', sans-serif;font-size:7px;font-weight:normal;color:#e4e4e4;"><span class="i" style="transform:translateX(0.50px) scaleX(0.8705)">Edit</span></span>
<span class="t" style="transform:translate3d(254px,83.17px,0);line-height:11px;font-family:'Liberation Sans', sans-serif;font-size:7px;font-weight:normal;color:#e4e4e4;"><span class="i" style="transform:translateX(0.00px) scaleX(0.8742)">View: Standard</span></span>
<span class="t" style="transform:translate3d(322px,83.17px,0);line-height:11px;font-family:'Liberation Sans', sans-serif;font-size:7px;font-weight:normal;color:#646464;"><span class="i" style="transform:translateX(0.50px) scaleX(0.8630)">Permissions</span></span>
<span class="t" style="transform:translate3d(378px,83.17px,0);line-height:11px;font-family:'Liberation Sans', sans-serif;font-size:7px;font-weight:normal;color:#e4e4e4;"><span class="i" style="transform:translateX(0.00px) scaleX(0.9014)">Run All</span></span>
<span class="t" style="transform:translate3d(422px,83.17px,0);line-height:11px;font-family:'Liberation Sans', sans-serif;font-size:7px;font-weight:normal;color:#e4e4e4;"><span class="i" style="transform:translateX(0.50px) scaleX(0.8366)">Clear</span></span>
<span class="t" style="transform:translate3d(563px,83.17px,0);line-height:11px;font-family:'Liberation Sans', sans-serif;font-size:7px;font-weight:normal;color:#e4e4e4;"><span class="i" style="transform:translateX(0.80px) scaleX(0.8795)">Publish</span></span>
<span class="t" style="transform:translate3d(608px,83.17px,0);line-height:11px;font-family:'Liberation Sans', sans-serif;font-size:7px;font-weight:normal;color:#e4e4e4;"><span class="i" style="transform:translateX(0.00px) scaleX(0.9101)">Comments</span></span>
<span class="t" style="transform:translate3d(660px,83.17px,0);line-height:11px;font-family:'Liberation Sans', sans-serif;font-size:7px;font-weight:normal;color:#e4e4e4;"><span class="i" style="transform:translateX(0.80px) scaleX(0.8953)">Experiment</span></span>
<span class="t" style="transform:translate3d(715px,83.17px,0);line-height:11px;font-family:'Liberation Sans', sans-serif;font-size:7px;font-weight:normal;color:#e4e4e4;"><span class="i" style="transform:translateX(0.30px) scaleX(0.9045)">Revision history</span></span>
<span class="t" style="transform:translate3d(41px,97.64px,0);line-height:20px;font-family:'Liberation Sans', sans-serif;font-size:14px;font-weight:normal;color:#d4d4d4;-webkit-text-stroke:0.3px #3c3c3c;"><span class="i" style="transform:translateX(0.40px) scaleX(0.8865)">Life Expectancy with respect to Year</span></span>
<span class="t" style="transform:translate3d(673px,101.69px,0);line-height:9px;font-family:'Liberation Sans', sans-serif;font-size:4.8px;font-weight:normal;color:#d8d8d8;"><span class="i" style="transform:translateX(0.40px) scaleX(0.9158)">SQL</span></span>
<span class="t" style="transform:translate3d(45px,127.91px,0);line-height:11px;font-family:'DejaVu Sans Mono', 'Liberation Mono', monospace;font-size:6.5px;font-weight:bold;color:#cfcfcf;"><span class="i" style="transform:translateX(0.40px) scaleX(0.9179)">1</span></span>
<span class="t" style="transform:translate3d(45px,137.51px,0);line-height:11px;font-family:'DejaVu Sans Mono', 'Liberation Mono', monospace;font-size:6.5px;font-weight:bold;color:#cfcfcf;"><span class="i" style="transform:translateX(0.40px) scaleX(0.9179)">2</span></span>
<span class="t" style="transform:translate3d(45px,147.11px,0);line-height:11px;font-family:'DejaVu Sans Mono', 'Liberation Mono', monospace;font-size:6.5px;font-weight:bold;color:#cfcfcf;"><span class="i" style="transform:translateX(0.40px) scaleX(0.9179)">3</span></span>
<span class="t" style="transform:translate3d(60px,127.91px,0);line-height:11px;font-family:'DejaVu Sans Mono', 'Liberation Mono', monospace;font-size:6.5px;font-weight:bold;color:#c8c8c8;"><span class="i" style="transform:translateX(0.60px)">%sql</span></span>
<span class="t" style="transform:translate3d(60px,147.11px,0);line-height:11px;font-family:'DejaVu Sans Mono', 'Liberation Mono', monospace;font-size:6.5px;font-weight:bold;color:#e0306a;"><span class="i" style="transform:translateX(0.60px)">select</span></span>
<span class="t" style="transform:translate3d(87px,147.11px,0);line-height:11px;font-family:'DejaVu Sans Mono', 'Liberation Mono', monospace;font-size:6.5px;font-weight:bold;color:#4eb4d8;"><span class="i" style="transform:translateX(0.90px)">avg</span></span>
<span class="t" style="transform:translate3d(99px,147.11px,0);line-height:11px;font-family:'DejaVu Sans Mono', 'Liberation Mono', monospace;font-size:6.5px;font-weight:bold;color:#e4e4e4;"><span class="i" style="transform:translateX(0.60px)">(Life_expectancy),</span></span>
<span class="t" style="transform:translate3d(173px,147.11px,0);line-height:11px;font-family:'DejaVu Sans Mono', 'Liberation Mono', monospace;font-size:6.5px;font-weight:bold;color:#4eb4d8;"><span class="i" style="transform:translateX(0.70px)">Year</span></span>
<span class="t" style="transform:translate3d(193px,147.11px,0);line-height:11px;font-family:'DejaVu Sans Mono', 'Liberation Mono', monospace;font-size:6.5px;font-weight:bold;color:#e0306a;"><span class="i" style="transform:translateX(0.20px)">from</span></span>
<span class="t" style="transform:translate3d(212px,147.11px,0);line-height:11px;font-family:'DejaVu Sans Mono', 'Liberation Mono', monospace;font-size:6.5px;font-weight:bold;color:#e4e4e4;"><span class="i" style="transform:translateX(0.70px)">LifeData</span></span>
<span class="t" style="transform:translate3d(247px,147.11px,0);line-height:11px;font-family:'DejaVu Sans Mono', 'Liberation Mono', monospace;font-size:6.5px;font-weight:bold;color:#e0306a;"><span class="i" style="transform:translateX(0.80px)">group</span></span>
<span class="t" style="transform:translate3d(271px,147.11px,0);line-height:11px;font-family:'DejaVu Sans Mono', 'Liberation Mono', monospace;font-size:6.5px;font-weight:bold;color:#e0306a;"><span class="i" style="transform:translateX(0.20px)">by</span></span>
<span class="t" style="transform:translate3d(282px,147.11px,0);line-height:11px;font-family:'DejaVu Sans Mono', 'Liberation Mono', monospace;font-size:6.5px;font-weight:bold;color:#4eb4d8;"><span class="i" style="transform:translateX(0.90px)">Year</span></span>
<span class="t" style="transform:translate3d(302px,147.11px,0);line-height:11px;font-family:'DejaVu Sans Mono', 'Liberation Mono', monospace;font-size:6.5px;font-weight:bold;color:#e0306a;"><span class="i" style="transform:translateX(0.40px)">order</span></span>
<span class="t" style="transform:translate3d(325px,147.11px,0);line-height:11px;font-family:'DejaVu Sans Mono', 'Liberation Mono', monospace;font-size:6.5px;font-weight:bold;color:#e0306a;"><span class="i" style="transform:translateX(0.80px)">by</span></span>
<span class="t" style="transform:translate3d(337px,147.11px,0);line-height:11px;font-family:'DejaVu Sans Mono', 'Liberation Mono', monospace;font-size:6.5px;font-weight:bold;color:#4eb4d8;"><span class="i" style="transform:translateX(0.50px)">Year</span></span>
<span class="t" style="transform:translate3d(356px,147.11px,0);line-height:11px;font-family:'DejaVu Sans Mono', 'Liberation Mono', monospace;font-size:6.5px;font-weight:bold;color:#e0306a;"><span class="i" style="transform:translateX(1.00px)">asc</span></span>
<span class="t" style="transform:translate3d(55px,168.11px,0);line-height:11px;font-family:'Liberation Sans', sans-serif;font-size:6.8px;font-weight:normal;color:#b8b8b8;"><span class="i" style="transform:translateX(0.50px) scaleX(0.8936)">(2) Spark Jobs</span></span>
<span class="t" style="transform:translate3d(81px,373.91px,0);line-height:11px;font-family:'Liberation Sans', sans-serif;font-size:6.8px;font-weight:normal;color:#b4b4b4;"><span class="i" style="transform:translateX(0.62px)">0</span></span>
<span class="t" style="transform:translate3d(77px,350.09px,0);line-height:11px;font-family:'Liberation Sans', sans-serif;font-size:6.8px;font-weight:normal;color:#b4b4b4;"><span class="i" style="transform:translateX(0.84px)">10</span></span>
<span class="t" style="transform:translate3d(77px,326.27px,0);line-height:11px;font-family:'Liberation Sans', sans-serif;font-size:6.8px;font-weight:normal;color:#b4b4b4;"><span class="i" style="transform:translateX(0.84px)">20</span></span>
<span class="t" style="transform:translate3d(77px,302.46px,0);line-height:11px;font-family:'Liberation Sans', sans-serif;font-size:6.8px;font-weight:normal;color:#b4b4b4;"><span class="i" style="transform:translateX(0.84px)">30</span></span>
<span class="t" style="transform:translate3d(77px,278.64px,0);line-height:11px;font-family:'Liberation Sans', sans-serif;font-size:6.8px;font-weight:normal;color:#b4b4b4;"><span class="i" style="transform:translateX(0.84px)">40</span></span>
<span class="t" style="transform:translate3d(77px,254.82px,0);line-height:11px;font-family:'Liberation Sans', sans-serif;font-size:6.8px;font-weight:normal;color:#b4b4b4;"><span class="i" style="transform:translateX(0.84px)">50</span></span>
<span class="t" style="transform:translate3d(77px,231.00px,0);line-height:11px;font-family:'Liberation Sans', sans-serif;font-size:6.8px;font-weight:normal;color:#b4b4b4;"><span class="i" style="transform:translateX(0.84px)">60</span></span>
<span class="t" style="transform:translate3d(77px,207.19px,0);line-height:11px;font-family:'Liberation Sans', sans-serif;font-size:6.8px;font-weight:normal;color:#b4b4b4;"><span class="i" style="transform:translateX(0.84px)">70</span></span>
<span class="t" style="transform:translate3d(94px,378.71px,0);line-height:11px;font-family:'Liberation Sans', sans-serif;font-size:6.8px;font-weight:normal;color:#b4b4b4;"><span class="i" style="transform:translateX(0.99px)">2000</span></span>
<span class="t" style="transform:translate3d(128px,378.71px,0);line-height:11px;font-family:'Liberation Sans', sans-serif;font-size:6.8px;font-weight:normal;color:#b4b4b4;"><span class="i" style="transform:translateX(0.79px)">2001</span></span>
<span class="t" style="transform:translate3d(162px,378.71px,0);line-height:11px;font-family:'Liberation Sans', sans-serif;font-size:6.8px;font-weight:normal;color:#b4b4b4;"><span class="i" style="transform:translateX(0.59px)">2002</span></span>
<span class="t" style="transform:translate3d(196px,378.71px,0);line-height:11px;font-family:'Liberation Sans', sans-serif;font-size:6.8px;font-weight:normal;color:#b4b4b4;"><span class="i" style="transform:translateX(0.39px)">2003</span></span>
<span class="t" style="transform:translate3d(230px,378.71px,0);line-height:11px;font-family:'Liberation Sans', sans-serif;font-size:6.8px;font-weight:normal;color:#b4b4b4;"><span class="i" style="transform:translateX(0.19px)">2004</span></span>
<span class="t" style="transform:translate3d(263px,378.71px,0);line-height:11px;font-family:'Liberation Sans', sans-serif;font-size:6.8px;font-weight:normal;color:#b4b4b4;"><span class="i" style="transform:translateX(0.99px)">2005</span></span>
<span class="t" style="transform:translate3d(297px,378.71px,0);line-height:11px;font-family:'Liberation Sans', sans-serif;font-size:6.8px;font-weight:normal;color:#b4b4b4;"><span class="i" style="transform:translateX(0.79px)">2006</span></span>
<span class="t" style="transform:translate3d(331px,378.71px,0);line-height:11px;font-family:'Liberation Sans', sans-serif;font-size:6.8px;font-weight:normal;color:#b4b4b4;"><span class="i" style="transform:translateX(0.59px)">2007</span></span>
<span class="t" style="transform:translate3d(365px,378.71px,0);line-height:11px;font-family:'Liberation Sans', sans-serif;font-size:6.8px;font-weight:normal;color:#b4b4b4;"><span class="i" style="transform:translateX(0.39px)">2008</span></span>
<span class="t" style="transform:translate3d(399px,378.71px,0);line-height:11px;font-family:'Liberation Sans', sans-serif;font-size:6.8px;font-weight:normal;color:#b4b4b4;"><span class="i" style="transform:translateX(0.19px)">2009</span></span>
<span class="t" style="transform:translate3d(432px,378.71px,0);line-height:11px;font-family:'Liberation Sans', sans-serif;font-size:6.8px;font-weight:normal;color:#b4b4b4;"><span class="i" style="transform:translateX(0.99px)">2010</span></span>
<span class="t" style="transform:translate3d(467px,378.71px,0);line-height:11px;font-family:'Liberation Sans', sans-serif;font-size:6.8px;font-weight:normal;color:#b4b4b4;"><span class="i" style="transform:translateX(0.04px)">2011</span></span>
<span class="t" style="transform:translate3d(500px,378.71px,0);line-height:11px;font-family:'Liberation Sans', sans-serif;font-size:6.8px;font-weight:normal;color:#b4b4b4;"><span class="i" style="transform:translateX(0.59px)">2012</span></span>
<span class="t" style="transform:translate3d(534px,378.71px,0);line-height:11px;font-family:'Liberation Sans', sans-serif;font-size:6.8px;font-weight:normal;color:#b4b4b4;"><span class="i" style="transform:translateX(0.39px)">2013</span></span>
<span class="t" style="transform:translate3d(568px,378.71px,0);line-height:11px;font-family:'Liberation Sans', sans-serif;font-size:6.8px;font-weight:normal;color:#b4b4b4;"><span class="i" style="transform:translateX(0.19px)">2014</span></span>
<span class="t" style="transform:translate3d(601px,378.71px,0);line-height:11px;font-family:'Liberation Sans', sans-serif;font-size:6.8px;font-weight:normal;color:#b4b4b4;"><span class="i" style="transform:translateX(0.99px)">2015</span></span>
<span class="t" style="transform:translate3d(347px,399.78px,0);line-height:13px;font-family:'DejaVu Sans', 'Liberation Sans', sans-serif;font-size:8px;font-weight:normal;color:#dcdcdc;"><span class="i" style="transform:translateX(0.00px) scaleX(1.0745)">Year</span></span>
<span class="t" style="transform:translate3d(44px,415.88px,0);line-height:13px;font-family:'Liberation Sans', sans-serif;font-size:8px;font-weight:normal;color:#3a3a3a;"><span class="i" style="transform:translateX(0.20px) scaleX(0.9248)">Type here to search</span></span>
<span class="t" style="transform:translate3d(596px,416.76px,0);line-height:12px;font-family:'Liberation Sans', sans-serif;font-size:7.6px;font-weight:normal;color:#fff;"><span class="i" style="transform:translateX(0.50px) scaleX(0.8545)">24°C</span></span>
<span class="t" style="transform:translate3d(616px,416.76px,0);line-height:12px;font-family:'Liberation Sans', sans-serif;font-size:7.6px;font-weight:normal;color:#fff;"><span class="i" style="transform:translateX(0.00px) scaleX(0.9216)">Light rain</span></span>
<span class="t" style="transform:translate3d(689px,412.82px,0);line-height:10px;font-family:'Liberation Sans', sans-serif;font-size:6.2px;font-weight:normal;color:#fff;"><span class="i" style="transform:translateX(0.80px) scaleX(0.8717)">ENG</span></span>
<span class="t" style="transform:translate3d(691px,421.12px,0);line-height:10px;font-family:'Liberation Sans', sans-serif;font-size:6.2px;font-weight:normal;color:#fff;"><span class="i" style="transform:translateX(0.80px) scaleX(0.8595)">US</span></span>
<span class="t" style="transform:translate3d(716px,411.88px,0);line-height:11px;font-family:'Liberation Sans', sans-serif;font-size:6.4px;font-weight:normal;color:#fff;"><span class="i" style="transform:translateX(0.00px) scaleX(0.8875)">08:46</span></span>
<span class="t" style="transform:translate3d(708px,420.18px,0);line-height:11px;font-family:'Liberation Sans', sans-serif;font-size:6.4px;font-weight:normal;color:#fff;"><span class="i" style="transform:translateX(0.00px) scaleX(0.9326)">07-08-2022</span></span>
<span class="t" style="transform:translate3d(753px,420.40px,0);line-height:8px;font-family:'Liberation Sans', sans-serif;font-size:4.2px;font-weight:bold;color:#fff;"><span class="i" style="transform:translateX(0.43px)">2</span></span>

<div class="a" style="left:97px;top:3px;width:13px;height:11px;background:linear-gradient(90deg,rgba(255,255,255,0),rgba(255,255,255,0.9) 70%,#fff);will-change:transform;"></div>
</body></html>
